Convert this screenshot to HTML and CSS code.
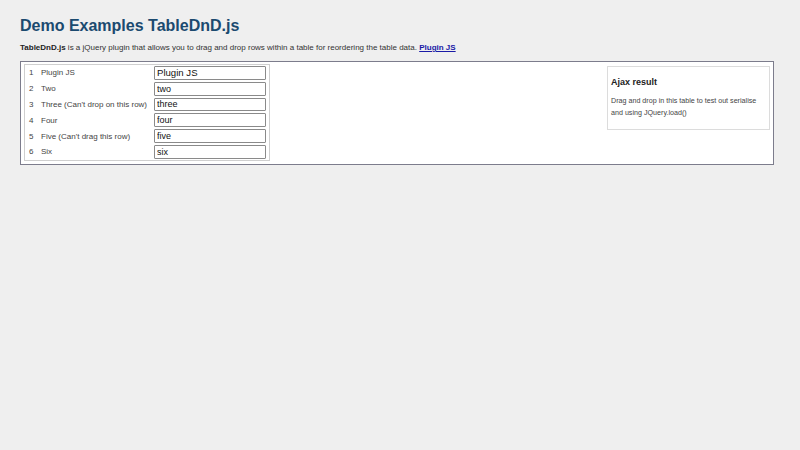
FILE: index.html
```html
<!DOCTYPE html>
<html>
<head>
<meta charset="utf-8">
<title>Demo Examples TableDnD.js</title>
<link rel="stylesheet" href="styles.css">
</head>
<body>
<h1 class="title">Demo Examples TableDnD.js</h1>
<p class="intro"><strong>TableDnD.js</strong> is a jQuery plugin that allows you to drag and drop rows within a table for reordering the table data. <a href="#" class="link">Plugin JS</a></p>
<div class="demo">
  <table class="dnd">
    <tr><td class="num">1</td><td class="label">Plugin JS</td><td class="field"><input type="text" value="Plugin JS" class="big"></td></tr>
    <tr><td class="num">2</td><td class="label">Two</td><td class="field"><input type="text" value="two"></td></tr>
    <tr><td class="num">3</td><td class="label">Three (Can't drop on this row)</td><td class="field"><input type="text" value="three"></td></tr>
    <tr><td class="num">4</td><td class="label">Four</td><td class="field"><input type="text" value="four"></td></tr>
    <tr><td class="num">5</td><td class="label">Five (Can't drag this row)</td><td class="field"><input type="text" value="five"></td></tr>
    <tr><td class="num">6</td><td class="label">Six</td><td class="field"><input type="text" value="six"></td></tr>
  </table>
  <div class="ajax">
    <h3 class="ajax-title">Ajax result</h3>
    <p class="ajax-text">Drag and drop in this table to test out serialise and using JQuery.load()</p>
  </div>
</div>
</body>
</html>
```
FILE: styles.css
```css
html, body {
  margin: 0;
  padding: 0;
  background: #efefef;
}
body {
  font-family: "Liberation Sans", Arial, sans-serif;
  color: #333;
  padding: 16px 26px 0 20px;
}
.title {
  margin: 0;
  font-size: 16px;
  font-weight: bold;
  color: #1b4a6f;
  line-height: 20px;
}
.intro {
  margin: 6px 0 0;
  font-size: 8px;
  line-height: 12px;
  color: #333;
}
.intro strong { color: #222; }
.link {
  color: #1a1aa6;
  font-weight: bold;
  text-decoration: underline;
}
.demo {
  margin-top: 7px;
  background: #fff;
  border: 1px solid #7c7c8c;
  padding: 2px 3px 3px 3px;
  display: flex;
  justify-content: space-between;
  align-items: flex-start;
}
.dnd {
  border: 1px solid #cfcfcf;
  border-collapse: separate;
  border-spacing: 0;
  font-size: 8px;
  color: #444;
}
.dnd td {
  padding: 1px 0;
  height: 13.8px;
  vertical-align: middle;
  white-space: nowrap;
}
.num { width: 12px; padding-left: 4px !important; }
.label { width: 113px; }
.field { padding-right: 3px !important; }
.dnd input {
  display: block;
  box-sizing: border-box;
  width: 112px;
  height: 13.8px;
  margin: 0;
  padding: 0 2px;
  border: 1px solid #8a8a8a;
  border-radius: 1px;
  font-family: "Liberation Sans", Arial, sans-serif;
  font-size: 9px;
  color: #111;
  background: #fff;
}
.dnd input.big { font-size: 9.6px; }
.ajax {
  width: 163px;
  box-sizing: border-box;
  height: 64px;
  margin-top: 2px;
  border: 1px solid #dcdcdc;
  padding: 9px 3px 0 3px;
}
.ajax-title {
  margin: 0;
  font-size: 9px;
  line-height: 12px;
  color: #222;
}
.ajax-text {
  margin: 7px 0 0;
  font-size: 7.15px;
  line-height: 12px;
  color: #444;
}
```
